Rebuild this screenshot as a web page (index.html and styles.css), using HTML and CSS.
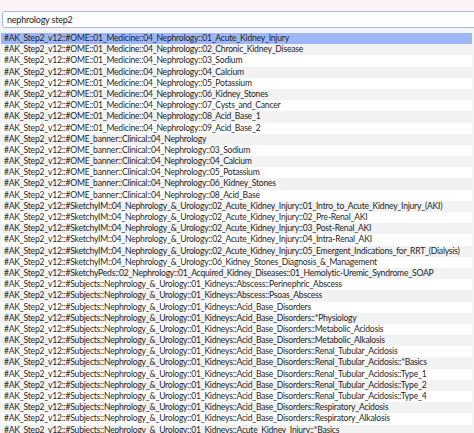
FILE: index.html
```html
<!DOCTYPE html>
<html>
<head>
<meta charset="utf-8">
<link rel="stylesheet" href="styles.css">
</head>
<body>
<div class="window">
  <div class="topband"></div>
  <div class="searchrow">
    <div class="search">nephrology step2</div>
  </div>
  <ul class="list">
    <li class="sel">#AK_Step2_v12::#OME::01_Medicine::04_Nephrology::01_Acute_Kidney_Injury</li>
    <li>#AK_Step2_v12::#OME::01_Medicine::04_Nephrology::02_Chronic_Kidney_Disease</li>
    <li>#AK_Step2_v12::#OME::01_Medicine::04_Nephrology::03_Sodium</li>
    <li>#AK_Step2_v12::#OME::01_Medicine::04_Nephrology::04_Calcium</li>
    <li>#AK_Step2_v12::#OME::01_Medicine::04_Nephrology::05_Potassium</li>
    <li>#AK_Step2_v12::#OME::01_Medicine::04_Nephrology::06_Kidney_Stones</li>
    <li>#AK_Step2_v12::#OME::01_Medicine::04_Nephrology::07_Cysts_and_Cancer</li>
    <li>#AK_Step2_v12::#OME::01_Medicine::04_Nephrology::08_Acid_Base_1</li>
    <li>#AK_Step2_v12::#OME::01_Medicine::04_Nephrology::09_Acid_Base_2</li>
    <li>#AK_Step2_v12::#OME_banner::Clinical::04_Nephrology</li>
    <li>#AK_Step2_v12::#OME_banner::Clinical::04_Nephrology::03_Sodium</li>
    <li>#AK_Step2_v12::#OME_banner::Clinical::04_Nephrology::04_Calcium</li>
    <li>#AK_Step2_v12::#OME_banner::Clinical::04_Nephrology::05_Potassium</li>
    <li>#AK_Step2_v12::#OME_banner::Clinical::04_Nephrology::06_Kidney_Stones</li>
    <li>#AK_Step2_v12::#OME_banner::Clinical::04_Nephrology::08_Acid_Base</li>
    <li>#AK_Step2_v12::#SketchyIM::04_Nephrology_&amp;_Urology::02_Acute_Kidney_Injury::01_Intro_to_Acute_Kidney_Injury_(AKI)</li>
    <li>#AK_Step2_v12::#SketchyIM::04_Nephrology_&amp;_Urology::02_Acute_Kidney_Injury::02_Pre-Renal_AKI</li>
    <li>#AK_Step2_v12::#SketchyIM::04_Nephrology_&amp;_Urology::02_Acute_Kidney_Injury::03_Post-Renal_AKI</li>
    <li>#AK_Step2_v12::#SketchyIM::04_Nephrology_&amp;_Urology::02_Acute_Kidney_Injury::04_Intra-Renal_AKI</li>
    <li>#AK_Step2_v12::#SketchyIM::04_Nephrology_&amp;_Urology::02_Acute_Kidney_Injury::05_Emergent_Indications_for_RRT_(Dialysis)</li>
    <li>#AK_Step2_v12::#SketchyIM::04_Nephrology_&amp;_Urology::06_Kidney_Stones_Diagnosis_&amp;_Management</li>
    <li>#AK_Step2_v12::#SketchyPeds::02_Nephrology::01_Acquired_Kidney_Diseases::01_Hemolytic-Uremic_Syndrome_SOAP</li>
    <li>#AK_Step2_v12::#Subjects::Nephrology_&amp;_Urology::01_Kidneys::Abscess::Perinephric_Abscess</li>
    <li>#AK_Step2_v12::#Subjects::Nephrology_&amp;_Urology::01_Kidneys::Abscess::Psoas_Abscess</li>
    <li>#AK_Step2_v12::#Subjects::Nephrology_&amp;_Urology::01_Kidneys::Acid_Base_Disorders</li>
    <li>#AK_Step2_v12::#Subjects::Nephrology_&amp;_Urology::01_Kidneys::Acid_Base_Disorders::*Physiology</li>
    <li>#AK_Step2_v12::#Subjects::Nephrology_&amp;_Urology::01_Kidneys::Acid_Base_Disorders::Metabolic_Acidosis</li>
    <li>#AK_Step2_v12::#Subjects::Nephrology_&amp;_Urology::01_Kidneys::Acid_Base_Disorders::Metabolic_Alkalosis</li>
    <li>#AK_Step2_v12::#Subjects::Nephrology_&amp;_Urology::01_Kidneys::Acid_Base_Disorders::Renal_Tubular_Acidosis</li>
    <li>#AK_Step2_v12::#Subjects::Nephrology_&amp;_Urology::01_Kidneys::Acid_Base_Disorders::Renal_Tubular_Acidosis::*Basics</li>
    <li>#AK_Step2_v12::#Subjects::Nephrology_&amp;_Urology::01_Kidneys::Acid_Base_Disorders::Renal_Tubular_Acidosis::Type_1</li>
    <li>#AK_Step2_v12::#Subjects::Nephrology_&amp;_Urology::01_Kidneys::Acid_Base_Disorders::Renal_Tubular_Acidosis::Type_2</li>
    <li>#AK_Step2_v12::#Subjects::Nephrology_&amp;_Urology::01_Kidneys::Acid_Base_Disorders::Renal_Tubular_Acidosis::Type_4</li>
    <li>#AK_Step2_v12::#Subjects::Nephrology_&amp;_Urology::01_Kidneys::Acid_Base_Disorders::Respiratory_Acidosis</li>
    <li>#AK_Step2_v12::#Subjects::Nephrology_&amp;_Urology::01_Kidneys::Acid_Base_Disorders::Respiratory_Alkalosis</li>
    <li>#AK_Step2_v12::#Subjects::Nephrology_&amp;_Urology::01_Kidneys::Acute_Kidney_Injury::*Basics</li>
  </ul>
</div>
</body>
</html>
```
FILE: styles.css
```css
html, body {
  margin: 0;
  padding: 0;
  background: #f4f3f8;
  overflow: hidden;
}
.window {
  width: 474px;
  height: 433px;
  overflow: hidden;
  font-family: Lato, "Noto Sans", sans-serif;
  color: #1f1f1f;
}
.topband {
  height: 11px;
  background: #fbf3f6;
}
.searchrow {
  padding-left: 2px;
  height: 22px;
}
.search {
  box-sizing: border-box;
  height: 17px;
  margin-right: -6px;
  border: 1px solid #a9b7d9;
  border-radius: 3px;
  background: #ffffff;
  padding-left: 4px;
  font-size: 9px;
  letter-spacing: -0.2px;
  line-height: 15px;
  color: #222;
}
.list {
  list-style: none;
  margin: 0 2px 0 1px;
  padding: 0;
  background: #ffffff;
}
.list li {
  height: 11.2px;
  line-height: 11.2px;
  font-size: 8.6px;
  letter-spacing: -0.23px;
  padding-left: 3px;
  white-space: nowrap;
  overflow: hidden;
}
.list li:nth-child(even) {
  background: #f2f2f2;
}
.list li.sel {
  background: #9db6f6;
}
```
